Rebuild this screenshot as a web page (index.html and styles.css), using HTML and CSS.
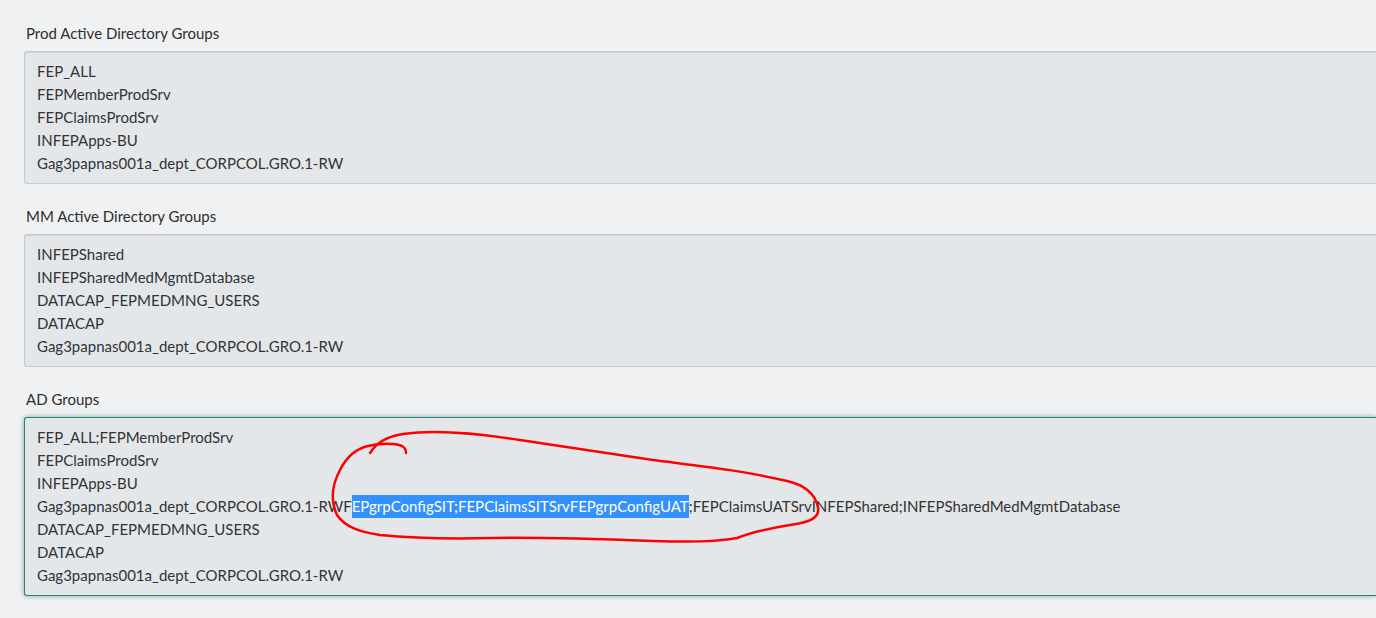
FILE: index.html
```html
<!DOCTYPE html>
<html lang="en">
<head>
    <meta charset="UTF-8">
    <title>AD Groups</title>
    <link rel="stylesheet" href="styles.css">
</head>
<body>
    <div class="form">
        <div class="group">
            <label class="label">Prod Active Directory Groups</label>
            <div class="field">
                FEP_ALL<br>
                FEPMemberProdSrv<br>
                FEPClaimsProdSrv<br>
                INFEPApps-BU<br>
                Gag3papnas001a_dept_CORPCOL.GRO.1-RW
            </div>
        </div>

        <div class="group">
            <label class="label">MM Active Directory Groups</label>
            <div class="field">
                INFEPShared<br>
                INFEPSharedMedMgmtDatabase<br>
                DATACAP_FEPMEDMNG_USERS<br>
                DATACAP<br>
                Gag3papnas001a_dept_CORPCOL.GRO.1-RW
            </div>
        </div>

        <div class="group">
            <label class="label">AD Groups</label>
            <div class="field focus">
                FEP_ALL;FEPMemberProdSrv<br>
                FEPClaimsProdSrv<br>
                INFEPApps-BU<br>
                Gag3papnas001a_dept_CORPCOL.GRO.1-RWF<span class="selected">EPgrpConfigSIT;FEPClaimsSITSrvFEPgrpConfigUAT</span>;FEPClaimsUATSrvINFEPShared;INFEPSharedMedMgmtDatabase<br>
                DATACAP_FEPMEDMNG_USERS<br>
                DATACAP<br>
                Gag3papnas001a_dept_CORPCOL.GRO.1-RW
            </div>
        </div>
    </div>

    <!-- red pen scribble drawn on top of the screenshot -->
    <svg class="scribble" width="1376" height="618" viewBox="0 0 1376 618">
        <path d="M370 453 C376 444 384 437 403 434 C430 430 470 432 520 440 C560 446 600 452 653 460 C700 466 740 470 787 481 C805 485 815 494 818 507 C820 517 812 522 790 525 C765 529 750 533 737 538 C715 542 690 542 653 541 C600 539 540 537 492 538 C450 539 410 538 380 535 C360 532 345 527 337 515 C330 500 332 485 340 470 C346 458 355 449 368 446 C380 443 395 443 402 446 C406 448 406 451 406 453"
              fill="none" stroke="#f00" stroke-width="2.5" stroke-linecap="round" stroke-linejoin="round"/>
    </svg>
</body>
</html>
```
FILE: styles.css
```css
html, body {
    margin: 0;
    overflow: hidden;
}

body {
    font-family: Lato, "Open Sans", sans-serif;
    font-size: 15px;
    line-height: 23px;
    color: #2e2e2e;
    background-color: #f0f1f3;
}

.form {
    padding: 22px 0 0 24px;
}

.group {
    margin-bottom: 21px;
}

.label {
    display: block;
    padding-left: 2px;
    margin-bottom: 6px;
}

/* boxes run off the right side of the window, so no right edge */
.field {
    padding: 8px 12px;
    background-color: #e4e7ea;
    border: 1px solid #c7c9cc;
    border-right: none;
    border-radius: 3px 0 0 3px;
    box-shadow: inset 0 1px 1px rgba(0,0,0,0.08);
    color: #333;
    white-space: nowrap;
}

.field.focus {
    border-color: #2d7f70;
    box-shadow: 0 0 5px rgba(45,127,112,0.6);
}

.selected {
    display: inline-block;
    line-height: 23px;
    background-color: #3390ff;
    color: #fff;
}

.scribble {
    position: absolute;
    top: 0;
    left: 0;
    pointer-events: none;
}
```
